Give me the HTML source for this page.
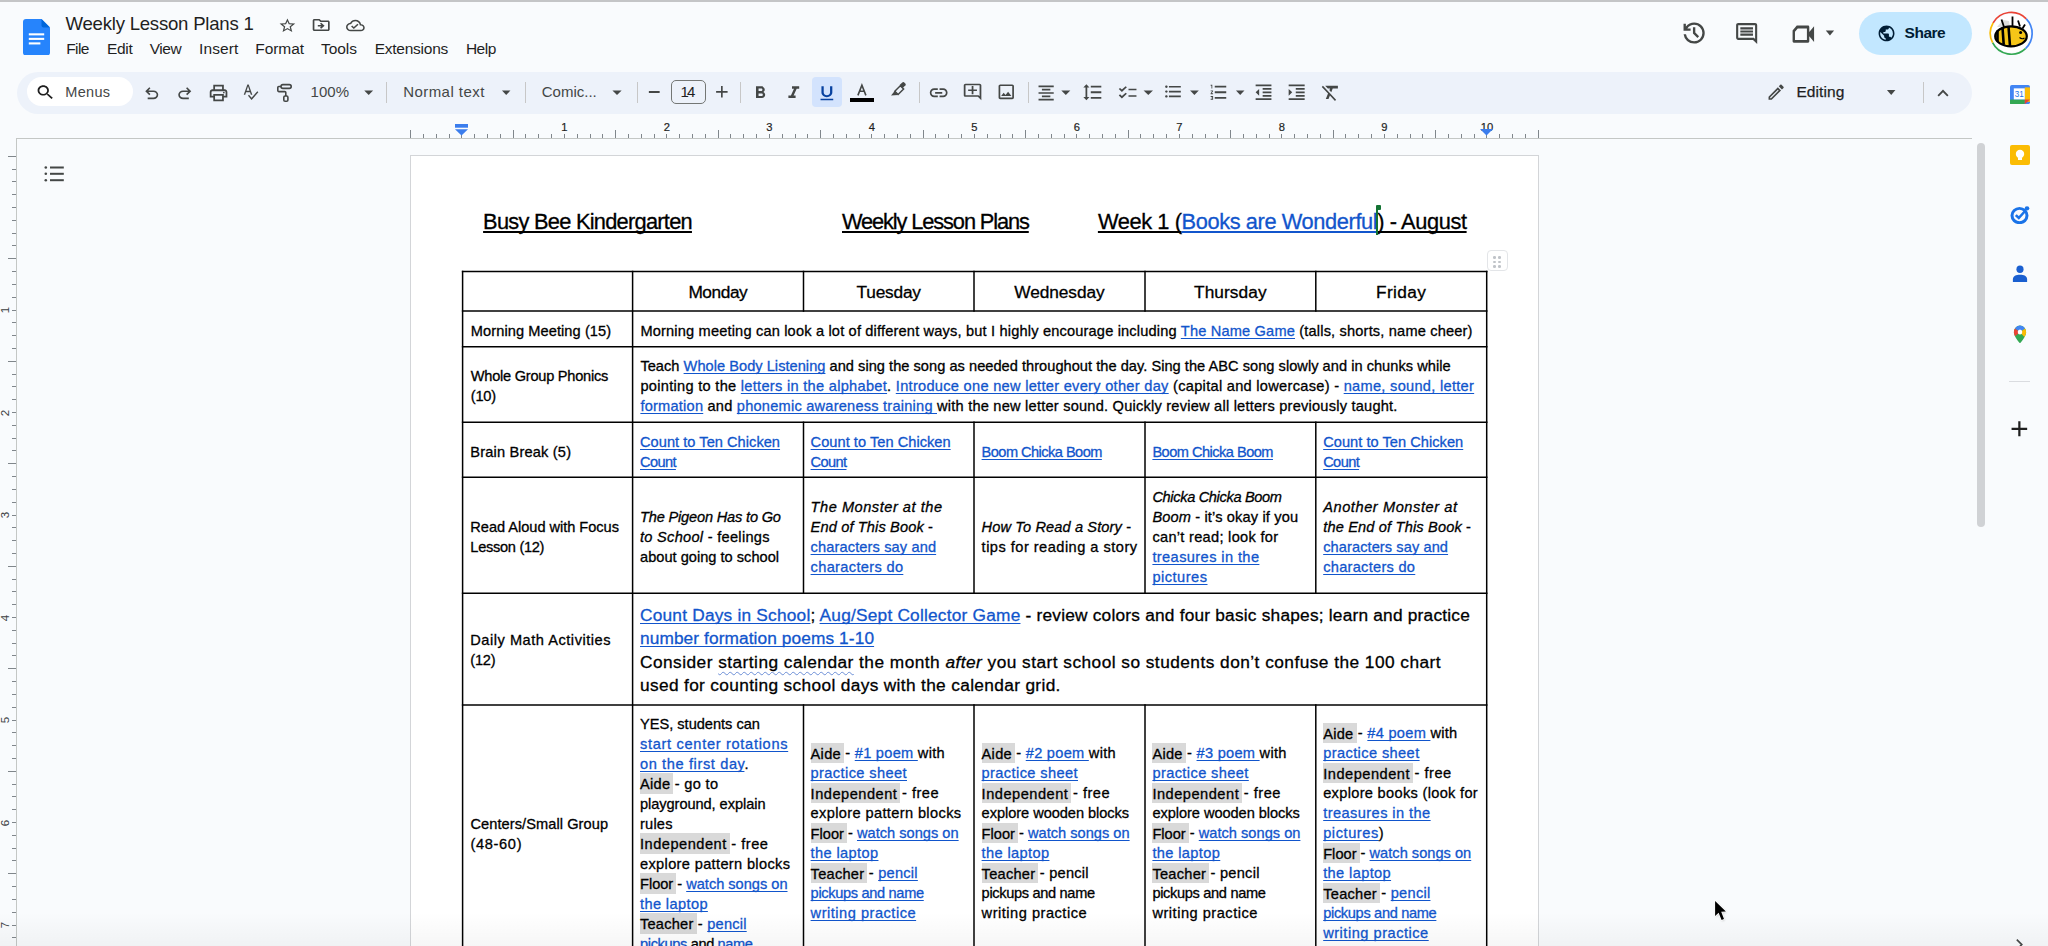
<!DOCTYPE html>
<html><head><meta charset="utf-8"><style>
*{margin:0;padding:0;box-sizing:content-box}
html,body{width:2048px;height:946px;overflow:hidden;background:#f9fbfd;font-family:"Liberation Sans",sans-serif}
.ic{position:absolute;display:block}
.t{position:absolute;white-space:pre;line-height:20px}
.d{-webkit-text-stroke:0.3px currentColor;color:#000}
u.l{color:#1155cc;text-decoration:underline;text-decoration-thickness:1px;text-underline-offset:2px}
u.k{text-decoration:underline;text-decoration-thickness:2px;text-underline-offset:1.5px}
u.k2{text-decoration-thickness:2px;text-underline-offset:1.5px}
.h{background:#d9d9d9;padding:2.8px 0 1.6px 0;box-shadow:3px 0 0 #d9d9d9}
.sp{text-decoration-skip-ink:none;text-decoration:underline wavy #6b8ed6;text-decoration-thickness:1px;text-underline-offset:3px}
.bl{position:absolute;background:#000}
u{text-decoration-skip-ink:none}
</style></head>
<body>
<div style="position:absolute;left:0;top:0;width:2048px;height:2px;background:#c4c5c7"></div>
<svg class="ic" style="left:23px;top:18.5px;width:27px;height:36.5px" viewBox="0 0 27 37" preserveAspectRatio="none"><path d="M3 0h15.5L27 8.5V34a3 3 0 0 1-3 3H3a3 3 0 0 1-3-3V3a3 3 0 0 1 3-3z" fill="#2684fc"/><path d="M18.5 0L27 8.5h-6.5a2 2 0 0 1-2-2z" fill="#0066da"/><rect x="5.8" y="14.5" width="15.4" height="2.1" fill="#fff"/><rect x="5.8" y="19.1" width="15.4" height="2.1" fill="#fff"/><rect x="5.8" y="23.7" width="11.6" height="2.1" fill="#fff"/></svg>
<div style="position:absolute;left:1859px;top:12.3px;width:113.3px;height:42.5px;border-radius:22px;background:#c2e7ff"></div>
<svg class="ic" style="left:1986px;top:8px;width:50px;height:50px" viewBox="1986 8 50 50">
<g fill="none" stroke-width="1.7">
<path d="M1993.1 22.8A20.9 20.9 0 0 1 2026.3 18.8" stroke="#ea4335"/>
<path d="M2026.3 18.8A20.9 20.9 0 0 1 2025.5 48.6" stroke="#4285f4"/>
<path d="M2025.5 48.6A20.9 20.9 0 0 1 1992.6 42.7" stroke="#34a853"/>
<path d="M1992.6 42.7A20.9 20.9 0 0 1 1993.1 22.8" stroke="#fbbc04"/>
</g>
<circle cx="2011.25" cy="33.25" r="19.3" fill="#fff"/>
<path d="M1997 27l6-7 6 1 1 6z" fill="#dcdcdc"/>
<ellipse cx="2011" cy="36.3" rx="15.8" ry="10" fill="#f5c518" stroke="#000" stroke-width="2.2"/>
<path d="M1997.5 30.5v11M2002.5 27.5l1.2 17M2008.5 26.5l1.5 19.5" stroke="#000" stroke-width="2.6" fill="none"/>
<path d="M2001.5 19.5l2.5 7.5M2012.5 16.5v10M2018 20.5l2 6M2025 24.5l-2.5 4" stroke="#000" stroke-width="1.8" fill="none"/>
<circle cx="2020.6" cy="32.4" r="1.5" fill="#000"/>
<path d="M2019.5 37.5q2.5 2.2 5 0.5" stroke="#000" stroke-width="1.2" fill="none"/>
</svg>
<div style="position:absolute;left:17.4px;top:71.5px;width:1954.6px;height:42px;border-radius:21px;background:#edf2fa"></div>
<div style="position:absolute;left:27px;top:77px;width:106.4px;height:29px;border-radius:15px;background:#fff"></div>
<div style="position:absolute;left:386.1px;top:82px;width:1px;height:21px;background:#c7c7c7"></div>
<div style="position:absolute;left:525.1px;top:82px;width:1px;height:21px;background:#c7c7c7"></div>
<div style="position:absolute;left:637.4px;top:82px;width:1px;height:21px;background:#c7c7c7"></div>
<div style="position:absolute;left:739.8px;top:82px;width:1px;height:21px;background:#c7c7c7"></div>
<div style="position:absolute;left:918.5px;top:82px;width:1px;height:21px;background:#c7c7c7"></div>
<div style="position:absolute;left:1028.0px;top:82px;width:1px;height:21px;background:#c7c7c7"></div>
<div style="position:absolute;left:1922.5px;top:82px;width:1px;height:20.799999999999997px;background:#c7c7c7"></div>
<div style="position:absolute;left:671.3px;top:80.2px;width:33.2px;height:22.1px;border:1px solid #747775;border-radius:5px"></div>
<div style="position:absolute;left:812.4px;top:76.5px;width:30px;height:30.8px;border-radius:4px;background:#d3e3fd"></div>
<div style="position:absolute;left:850.4px;top:98.4px;width:23.6px;height:3.6px;background:#000"></div>
<svg class="ic" style="left:270px;top:80px;width:30px;height:26px" viewBox="270 80 30 26" fill="none" stroke="#444746" stroke-width="1.6">
<rect x="281" y="84.6" width="10.2" height="3.8" rx="1.9"/>
<path d="M281 86.5H278.8Q277.8 86.5 277.8 87.5V90.6Q277.8 91.6 278.8 91.6H284.8Q285.8 91.6 285.8 92.6V96"/>
<rect x="283.8" y="96" width="4.1" height="5.3" rx="1.3"/>
</svg>
<svg class="ic" style="left:845px;top:76px;width:65px;height:30px" viewBox="845 76 65 30" fill="none" stroke="#444746">
<path d="M857.9 95.4L861.9 85.2L865.9 95.4M859.3 91.2H864.5" stroke-width="1.6"/>
<path d="M894.8 91.2L900.3 85.7L903.6 89L898.1 94.5Z" stroke-width="1.5"/>
<path d="M899.6 85L902.6 82.3Q903.3 81.7 904 82.3L905.5 83.8Q906.1 84.5 905.5 85.2L902.5 88.2Z" fill="#444746" stroke="none"/>
<path d="M894.5 91.3L898.2 95L891 95.5Z" fill="#444746" stroke="none"/>
</svg>
<svg class="ic" style="left:277.93px;top:16.87px;width:18.84px;height:17.18px" viewBox="0 0 24 24" preserveAspectRatio="none" fill="#444746"><path d="M22 9.24l-7.19-.62L12 2 9.19 8.63 2 9.24l5.46 4.73L5.82 21 12 17.27 18.18 21l-1.63-7.03L22 9.24zM12 15.4l-3.76 2.27 1-4.28-3.32-2.88 4.38-.38L12 6.1l1.71 4.04 4.38.38-3.32 2.88 1 4.28L12 15.4z"/></svg>
<svg class="ic" style="left:311.30px;top:15.74px;width:20.40px;height:18.08px" viewBox="0 0 24 24" preserveAspectRatio="none" fill="#444746"><path d="M20 6h-8l-2-2H4c-1.1 0-1.99.9-1.99 2L2 18c0 1.1.9 2 2 2h16c1.1 0 2-.9 2-2V8c0-1.1-.9-2-2-2zm0 12H4V6h5.17l2 2H20v10zm-7.84-6H8v2h4.16l-1.59 1.59L11.99 17 16 13.01 11.99 9l-1.41 1.41L12.16 12z"/></svg>
<svg class="ic" style="left:346.25px;top:16.55px;width:18.75px;height:17.10px" viewBox="0 0 24 24" preserveAspectRatio="none" fill="#444746"><path d="M19.35 10.04C18.67 6.59 15.64 4 12 4 9.11 4 6.6 5.64 5.35 8.04 2.34 8.36 0 10.91 0 14c0 3.31 2.69 6 6 6h13c2.76 0 5-2.24 5-5 0-2.64-2.05-4.78-4.65-4.96zM19 18H6c-2.21 0-4-1.79-4-4 0-2.05 1.53-3.76 3.56-3.97l1.07-.11.5-.95C8.080 7.14 9.94 6 12 6c2.62 0 4.88 1.86 5.39 4.43l.3 1.5 1.53.11c1.56.1 2.78 1.41 2.78 2.96 0 1.65-1.35 3-3 3zm-9-3.82l-2.09-2.09L6.5 13.5 10 17l6.01-6.01-1.41-1.41z"/></svg>
<svg class="ic" style="left:35.19px;top:83.07px;width:20.86px;height:18.66px" viewBox="0 0 24 24" preserveAspectRatio="none" fill="#1f1f1f"><path d="M15.5 14h-.79l-.28-.27C15.41 12.59 16 11.110 16 9.5 16 5.91 13.09 3 9.5 3S3 5.91 3 9.5 5.91 16 9.5 16c1.610 0 3.090-.59 4.230-1.57l.27.28v.79l5 4.99L20.49 19l-4.99-5zm-6 0C7.010 14 5 11.99 5 9.5S7.010 5 9.5 5 14 7.010 14 9.5 11.99 14 9.5 14z"/></svg>
<svg class="ic" style="left:141.75px;top:83.80px;width:19.50px;height:19.20px" viewBox="0 -960 960 960" preserveAspectRatio="none" fill="#444746"><path d="M280-200v-80h284q63 0 109.5-40T720-420q0-60-46.5-100T564-560H312l104 104-56 56-200-200 200-200 56 56-104 104h252q97 0 166.5 63T800-420q0 94-69.5 157T564-200H280Z"/></svg>
<svg class="ic" style="left:174.75px;top:83.80px;width:19.50px;height:19.20px" viewBox="0 -960 960 960" preserveAspectRatio="none" fill="#444746"><path d="M396-200q-97 0-166.5-63T160-420q0-94 69.5-157T396-640h252L544-744l56-56 200 200-200 200-56-56 104-104H396q-63 0-109.5 40T240-420q0 60 46.5 100T396-280h284v80H396Z"/></svg>
<svg class="ic" style="left:207.64px;top:81.75px;width:21.12px;height:22.00px" viewBox="0 0 24 24" preserveAspectRatio="none" fill="#444746"><path d="M19 8h-1V3H6v5H5c-1.66 0-3 1.34-3 3v6h4v4h12v-4h4v-6c0-1.66-1.34-3-3-3zM8 5h8v3H8V5zm8 14H8v-4h8v4zm4-4h-2v-2H6v2H4v-4c0-.55.45-1 1-1h14c.55 0 1 .45 1 1v4z"/><circle cx="18" cy="11.5" r="1"/></svg>
<svg class="ic" style="left:242.25px;top:81.62px;width:17.06px;height:19.08px" viewBox="0 0 24 24" preserveAspectRatio="none" fill="#444746"><path d="M12.45 16h2.09L9.43 3H7.57L2.46 16h2.09l1.12-3h5.64l1.14 3zm-6.02-5L8.5 5.48 10.57 11H6.43zm15.16.59l-8.09 8.09L9.83 16l-1.41 1.41 5.09 5.09L23 13l-1.41-1.41z"/></svg>
<svg class="ic" style="left:358.17px;top:80.60px;width:21.36px;height:22.56px" viewBox="0 0 24 24" preserveAspectRatio="none" fill="#444746"><path d="M7 10l5 5 5-5z"/></svg>
<svg class="ic" style="left:495.55px;top:80.60px;width:20.40px;height:22.56px" viewBox="0 0 24 24" preserveAspectRatio="none" fill="#444746"><path d="M7 10l5 5 5-5z"/></svg>
<svg class="ic" style="left:606.36px;top:80.60px;width:22.08px;height:22.56px" viewBox="0 0 24 24" preserveAspectRatio="none" fill="#444746"><path d="M7 10l5 5 5-5z"/></svg>
<svg class="ic" style="left:645.14px;top:80.00px;width:18.51px;height:24.00px" viewBox="0 0 24 24" preserveAspectRatio="none" fill="#444746"><path d="M19 13H5v-2h14v2z"/></svg>
<svg class="ic" style="left:711.69px;top:82.39px;width:19.71px;height:19.71px" viewBox="0 0 24 24" preserveAspectRatio="none" fill="#444746"><path d="M19 13h-6v6h-2v-6H5v-2h6V5h2v6h6v2z"/></svg>
<svg class="ic" style="left:749.81px;top:82.96px;width:20.54px;height:20.06px" viewBox="0 0 24 24" preserveAspectRatio="none" fill="#444746"><path d="M15.6 10.79c.97-.67 1.65-1.77 1.65-2.790 0-2.26-1.75-4-4-4H7v14h7.04c2.09 0 3.71-1.7 3.71-3.79 0-1.52-.86-2.82-2.15-3.42zM10 6.5h3c.83 0 1.5.67 1.5 1.5s-.67 1.5-1.5 1.5h-3v-3zm3.5 9H10v-3h3.5c.83 0 1.5.67 1.5 1.5s-.67 1.5-1.5 1.5z"/></svg>
<svg class="ic" style="left:783.20px;top:82.96px;width:21.60px;height:20.06px" viewBox="0 0 24 24" preserveAspectRatio="none" fill="#444746"><path d="M10 4v3h2.21l-3.42 8H6v3h8v-3h-2.21l3.42-8H18V4z"/></svg>
<svg class="ic" style="left:816.46px;top:83.67px;width:21.77px;height:18.67px" viewBox="0 0 24 24" preserveAspectRatio="none" fill="#0842a0"><path d="M12 17c3.31 0 6-2.69 6-6V3h-2.5v8c0 1.93-1.57 3.5-3.5 3.5S8.5 12.93 8.5 11V3H6v8c0 3.31 2.69 6 6 6zm-7 2v2h14v-2H5z"/></svg>
<svg class="ic" style="left:928.22px;top:81.70px;width:21.36px;height:21.60px" viewBox="0 0 24 24" preserveAspectRatio="none" fill="#444746"><path d="M3.9 12c0-1.71 1.39-3.1 3.1-3.1h4V7H7c-2.76 0-5 2.24-5 5s2.24 5 5 5h4v-1.9H7c-1.71 0-3.1-1.39-3.1-3.1zM8 13h8v-2H8v2zm9-6h-4v1.9h4c1.71 0 3.1 1.39 3.1 3.1s-1.39 3.1-3.1 3.1h-4V17h4c2.76 0 5-2.24 5-5s-2.24-5-5-5z"/></svg>
<svg class="ic" style="left:961.84px;top:81.85px;width:21.12px;height:19.80px" viewBox="0 0 24 24" preserveAspectRatio="none" fill="#444746"><path d="M22 4c0-1.1-.9-2-2-2H4c-1.1 0-2 .9-2 2v12c0 1.1.9 2 2 2h14l4 4V4zm-2 13.17L18.83 16H4V4h16v13.17zM13 5h-2v4H7v2h4v4h2v-4h4V9h-4z"/></svg>
<svg class="ic" style="left:995.73px;top:82.03px;width:20.53px;height:19.73px" viewBox="0 0 24 24" preserveAspectRatio="none" fill="#444746"><path d="M19 5v14H5V5h14m0-2H5c-1.1 0-2 .9-2 2v14c0 1.1.9 2 2 2h14c1.1 0 2-.9 2-2V5c0-1.1-.9-2-2-2zm-4.86 8.86l-3 3.87L9 13.14 6 17h12l-3.86-5.14z"/></svg>
<svg class="ic" style="left:1036.17px;top:82.50px;width:20.27px;height:20.00px" viewBox="0 0 24 24" preserveAspectRatio="none" fill="#444746"><path d="M7 15v2h10v-2H7zm-4 6h18v-2H3v2zm0-8h18v-2H3v2zm4-6v2h10V7H7zM3 3v2h18V3H3z"/></svg>
<svg class="ic" style="left:1054.70px;top:80.60px;width:21.60px;height:22.56px" viewBox="0 0 24 24" preserveAspectRatio="none" fill="#444746"><path d="M7 10l5 5 5-5z"/></svg>
<svg class="ic" style="left:1081.68px;top:81.21px;width:21.07px;height:22.59px" viewBox="0 0 24 24" preserveAspectRatio="none" fill="#444746"><path d="M6 7h2.5L5 3.5 1.5 7H4v10H1.5L5 20.5 8.5 17H6V7zm4-2v2h12V5H10zm0 14h12v-2H10v2zm0-6h12v-2H10v2z"/></svg>
<svg class="ic" style="left:1116.73px;top:82.62px;width:21.24px;height:19.43px" viewBox="0 0 24 24" preserveAspectRatio="none" fill="#444746"><path d="M22 7h-9v2h9V7zm0 8h-9v2h9v-2zM5.54 11L2 7.46l1.41-1.41 2.12 2.120 4.24-4.24 1.41 1.41L5.54 11zm0 8L2 15.46l1.41-1.41 2.12 2.12 4.24-4.24 1.41 1.41L5.54 19z"/></svg>
<svg class="ic" style="left:1137.42px;top:80.60px;width:22.56px;height:22.56px" viewBox="0 0 24 24" preserveAspectRatio="none" fill="#444746"><path d="M7 10l5 5 5-5z"/></svg>
<svg class="ic" style="left:1162.88px;top:82.40px;width:20.37px;height:19.20px" viewBox="0 0 24 24" preserveAspectRatio="none" fill="#444746"><path d="M4 10.5c-.83 0-1.5.67-1.5 1.5s.67 1.5 1.5 1.5 1.5-.67 1.5-1.5-.67-1.5-1.5-1.5zm0-6c-.83 0-1.5.67-1.5 1.5S3.17 7.5 4 7.5 5.5 6.83 5.5 6 4.83 4.5 4 4.5zm0 12c-.83 0-1.5.68-1.5 1.5s.68 1.5 1.5 1.5 1.5-.68 1.5-1.5-.67-1.5-1.5-1.5zM7 19h14v-2H7v2zm0-6h14v-2H7v2zm0-8v2h14V5H7z"/></svg>
<svg class="ic" style="left:1183.91px;top:80.60px;width:20.88px;height:22.56px" viewBox="0 0 24 24" preserveAspectRatio="none" fill="#444746"><path d="M7 10l5 5 5-5z"/></svg>
<svg class="ic" style="left:1208.76px;top:81.25px;width:19.71px;height:22.50px" viewBox="0 0 24 24" preserveAspectRatio="none" fill="#444746"><path d="M2 17h2v.5H3v1h1v.5H2v1h3v-4H2v1zm1-9h1V4H2v1h1v3zm-1 3h1.8L2 13.1v.9h3v-1H3.2L5 10.9V10H2v1zm5-6v2h14V5H7zm0 14h14v-2H7v2zm0-6h14v-2H7v2z"/></svg>
<svg class="ic" style="left:1229.85px;top:80.60px;width:20.40px;height:22.56px" viewBox="0 0 24 24" preserveAspectRatio="none" fill="#444746"><path d="M7 10l5 5 5-5z"/></svg>
<svg class="ic" style="left:1253.17px;top:81.92px;width:21.07px;height:20.67px" viewBox="0 0 24 24" preserveAspectRatio="none" fill="#444746"><path d="M11 17h10v-2H11v2zm-8-5l4 4V8l-4 4zm0 9h18v-2H3v2zM3 3v2h18V3H3zm8 6h10V7H11v2zm0 4h10v-2H11v2z"/></svg>
<svg class="ic" style="left:1286.33px;top:81.92px;width:21.33px;height:20.67px" viewBox="0 0 24 24" preserveAspectRatio="none" fill="#444746"><path d="M3 21h18v-2H3v2zM3 8v8l4-4-4-4zm8 9h10v-2H11v2zM3 3v2h18V3H3zm8 6h10V7H11v2zm0 4h10v-2H11v2z"/></svg>
<svg class="ic" style="left:1319.91px;top:80.65px;width:21.47px;height:22.80px" viewBox="0 0 24 24" preserveAspectRatio="none" fill="#444746"><path d="M3.27 5L2 6.27l6.97 6.97L6.5 19h3l1.570-3.66L16.73 21 18 19.73 3.55 5.27 3.27 5zM6 5v.18L8.82 8h2.4l-.72 1.68 2.1 2.1L14.21 8H20V5H6z"/></svg>
<svg class="ic" style="left:1766.47px;top:81.95px;width:20.26px;height:20.40px" viewBox="0 0 24 24" preserveAspectRatio="none" fill="#444746"><path d="M3 17.25V21h3.75L17.81 9.94l-3.75-3.75L3 17.25zM5.92 19H5v-.92l9.06-9.06.92.92L5.92 19zM20.71 5.63l-2.34-2.34c-.2-.2-.45-.29-.71-.29s-.51.1-.7.29l-1.83 1.83 3.750 3.75 1.83-1.83c.39-.39.39-1.02 0-1.41z"/></svg>
<svg class="ic" style="left:1880.55px;top:80.00px;width:20.40px;height:24.00px" viewBox="0 0 24 24" preserveAspectRatio="none" fill="#444746"><path d="M7 10l5 5 5-5z"/></svg>
<svg class="ic" style="left:1932.30px;top:82.44px;width:22.00px;height:22.67px" viewBox="0 0 24 24" preserveAspectRatio="none" fill="#444746"><path d="M12 8l-6 6 1.41 1.41L12 10.83l4.59 4.58L18 14z"/></svg>
<svg class="ic" style="left:1679.67px;top:19.08px;width:28.27px;height:28.13px" viewBox="0 -960 960 960" preserveAspectRatio="none" fill="#444746"><path d="M480-120q-138 0-240.5-91.5T122-440h82q14 104 92.5 172T480-200q117 0 198.5-81.5T760-480q0-117-81.5-198.5T480-760q-69 0-129 32t-101 88h110v80H120v-240h80v94q51-64 124.5-99T480-840q75 0 140.5 28.5t114 77q48.5 48.5 77 114T840-480q0 75-28.5 140.5t-77 114q-48.5 48.5-114 77T480-120Zm112-192L440-464v-216h80v184l128 128-56 56Z"/></svg>
<svg class="ic" style="left:1733.79px;top:21.40px;width:25.32px;height:25.20px" viewBox="0 0 24 24" preserveAspectRatio="none" fill="#444746"><path d="M21.99 4c0-1.1-.89-2-1.99-2H4c-1.1 0-2 .9-2 2v12c0 1.1.9 2 2 2h14l4 4-.01-18zM20 4v13.17L18.83 16H4V4h16zM6 12h12v2H6zm0-3h12v2H6zm0-3h12v2H6z"/></svg>
<svg class="ic" style="left:1789.42px;top:17.00px;width:28.67px;height:34.40px" viewBox="0 0 24 24" preserveAspectRatio="none" fill="#444746"><path d="M17 10.5V7c0-.55-.45-1-1-1H6.5L3 9.5V17c0 .55.45 1 1 1h12c.55 0 1-.45 1-1v-3.5l4 4v-11l-4 4zM15 16H5v-5.67L7.33 8H15v8z"/></svg>
<svg class="ic" style="left:1820.19px;top:21.40px;width:19.92px;height:23.04px" viewBox="0 0 24 24" preserveAspectRatio="none" fill="#444746"><path d="M7 10l5 5 5-5z"/></svg>
<svg class="ic" style="left:1877.21px;top:24.22px;width:19.08px;height:18.96px" viewBox="0 0 24 24" preserveAspectRatio="none" fill="#001d35"><path d="M12 2C6.48 2 2 6.48 2 12s4.48 10 10 10 10-4.48 10-10S17.52 2 12 2zm-1 17.93c-3.95-.49-7-3.85-7-7.93 0-.62.08-1.21.21-1.79L9 15v1c0 1.1.9 2 2 2v1.93zm6.9-2.54c-.26-.81-1-1.39-1.9-1.39h-1v-3c0-.55-.45-1-1-1H8v-2h2c.55 0 1-.45 1-1V7h2c1.1 0 2-.9 2-2v-.41c2.93 1.19 5 4.06 5 7.410 0 2.08-.8 3.97-2.1 5.39z"/></svg>
<svg class="ic" style="left:2006.13px;top:415.64px;width:26.74px;height:25.71px" viewBox="0 0 24 24" preserveAspectRatio="none" fill="#1f1f1f"><path d="M19 13h-6v6h-2v-6H5v-2h6V5h2v6h6v2z"/></svg>
<svg class="ic" style="left:2009.5px;top:85px;width:20px;height:19.2px" viewBox="0 0 21 20" preserveAspectRatio="none">
<rect x="0" y="0" width="21" height="20" rx="2" fill="#4285f4"/>
<rect x="15.5" y="2.5" width="5.5" height="15" fill="#fbbc04"/>
<rect x="0" y="15" width="15.5" height="5" rx="1" fill="#34a853"/>
<path d="M15.5 15H21L15.5 20z" fill="#ea4335"/>
<rect x="4" y="3.5" width="11.5" height="11.5" fill="#fff"/>
<text x="9.7" y="13" font-size="8.5" text-anchor="middle" fill="#1a73e8" font-family="Liberation Sans">31</text>
</svg>
<svg class="ic" style="left:2009.7px;top:144.6px;width:20px;height:20px" viewBox="0 0 20 20">
<rect width="20" height="20" rx="2" fill="#fbbc04"/><circle cx="10" cy="9" r="4.2" fill="#fff"/><rect x="8" y="13" width="4" height="2" fill="#fff"/></svg>
<svg class="ic" style="left:2010px;top:204.8px;width:20px;height:19.2px" viewBox="0 0 20 20" preserveAspectRatio="none">
<circle cx="9.5" cy="11" r="7.5" fill="none" stroke="#1a73e8" stroke-width="3"/><path d="M5.8 10.5l3 3 7-8" stroke="#1a73e8" stroke-width="2.6" fill="none"/><circle cx="17" cy="3.5" r="2.3" fill="#1a73e8"/></svg>
<svg class="ic" style="left:2012px;top:264.7px;width:16px;height:17.7px" viewBox="0 0 18 19" preserveAspectRatio="none">
<circle cx="9" cy="4.5" r="4" fill="#1a5fd0"/><path d="M1 19v-3.5C1 12 4.5 10.5 9 10.5s8 1.5 8 5V19z" fill="#1a5fd0"/></svg>
<svg class="ic" style="left:2013px;top:325px;width:14px;height:18.4px" viewBox="0 0 16 19" preserveAspectRatio="none">
<path d="M8 0.5A7 7 0 0 0 1 7.5c0 4.5 7 11.5 7 11.5s7-7 7-11.5A7 7 0 0 0 8 0.5z" fill="#34a853"/>
<path d="M8 0.5A7 7 0 0 0 2.2 3.5L8 7.5l5.8-4A7 7 0 0 0 8 0.5z" fill="#4285f4"/>
<path d="M2.2 3.5A7 7 0 0 0 1 7.5c0 1.2.5 2.6 1.3 4L8 7.5z" fill="#ea4335"/>
<path d="M13.8 3.5A7 7 0 0 1 15 7.5c0 1.5-.8 3.3-2 5L8 7.5z" fill="#fbbc04"/>
<circle cx="8" cy="7.3" r="2.6" fill="#fff"/></svg>
<div style="position:absolute;left:2008.8px;top:380.5px;width:21.2px;height:1px;background:#dadce0"></div>
<div style="position:absolute;left:16px;top:138px;width:1956px;height:1px;background:#c4c7c5"></div>
<div style="position:absolute;left:410.15px;top:129.5px;width:1px;height:8.5px;background:#80868b"></div>
<div style="position:absolute;left:422.96px;top:134px;width:1px;height:4px;background:#80868b"></div>
<div style="position:absolute;left:435.77px;top:134px;width:1px;height:4px;background:#80868b"></div>
<div style="position:absolute;left:448.59px;top:134px;width:1px;height:4px;background:#80868b"></div>
<div style="position:absolute;left:461.40px;top:134px;width:1px;height:4px;background:#80868b"></div>
<div style="position:absolute;left:474.21px;top:134px;width:1px;height:4px;background:#80868b"></div>
<div style="position:absolute;left:487.02px;top:134px;width:1px;height:4px;background:#80868b"></div>
<div style="position:absolute;left:499.84px;top:134px;width:1px;height:4px;background:#80868b"></div>
<div style="position:absolute;left:512.65px;top:129.5px;width:1px;height:8.5px;background:#80868b"></div>
<div style="position:absolute;left:525.46px;top:134px;width:1px;height:4px;background:#80868b"></div>
<div style="position:absolute;left:538.27px;top:134px;width:1px;height:4px;background:#80868b"></div>
<div style="position:absolute;left:551.09px;top:134px;width:1px;height:4px;background:#80868b"></div>
<div style="position:absolute;left:563.90px;top:134px;width:1px;height:4px;background:#80868b"></div>
<div class="t" style="left:549.40px;top:116.8px;width:30px;text-align:center;font-size:11.2px;color:#1f1f1f;-webkit-text-stroke:0.2px #1f1f1f">1</div>
<div style="position:absolute;left:576.71px;top:134px;width:1px;height:4px;background:#80868b"></div>
<div style="position:absolute;left:589.52px;top:134px;width:1px;height:4px;background:#80868b"></div>
<div style="position:absolute;left:602.34px;top:134px;width:1px;height:4px;background:#80868b"></div>
<div style="position:absolute;left:615.15px;top:129.5px;width:1px;height:8.5px;background:#80868b"></div>
<div style="position:absolute;left:627.96px;top:134px;width:1px;height:4px;background:#80868b"></div>
<div style="position:absolute;left:640.77px;top:134px;width:1px;height:4px;background:#80868b"></div>
<div style="position:absolute;left:653.59px;top:134px;width:1px;height:4px;background:#80868b"></div>
<div style="position:absolute;left:666.40px;top:134px;width:1px;height:4px;background:#80868b"></div>
<div class="t" style="left:651.90px;top:116.8px;width:30px;text-align:center;font-size:11.2px;color:#1f1f1f;-webkit-text-stroke:0.2px #1f1f1f">2</div>
<div style="position:absolute;left:679.21px;top:134px;width:1px;height:4px;background:#80868b"></div>
<div style="position:absolute;left:692.02px;top:134px;width:1px;height:4px;background:#80868b"></div>
<div style="position:absolute;left:704.84px;top:134px;width:1px;height:4px;background:#80868b"></div>
<div style="position:absolute;left:717.65px;top:129.5px;width:1px;height:8.5px;background:#80868b"></div>
<div style="position:absolute;left:730.46px;top:134px;width:1px;height:4px;background:#80868b"></div>
<div style="position:absolute;left:743.27px;top:134px;width:1px;height:4px;background:#80868b"></div>
<div style="position:absolute;left:756.09px;top:134px;width:1px;height:4px;background:#80868b"></div>
<div style="position:absolute;left:768.90px;top:134px;width:1px;height:4px;background:#80868b"></div>
<div class="t" style="left:754.40px;top:116.8px;width:30px;text-align:center;font-size:11.2px;color:#1f1f1f;-webkit-text-stroke:0.2px #1f1f1f">3</div>
<div style="position:absolute;left:781.71px;top:134px;width:1px;height:4px;background:#80868b"></div>
<div style="position:absolute;left:794.52px;top:134px;width:1px;height:4px;background:#80868b"></div>
<div style="position:absolute;left:807.34px;top:134px;width:1px;height:4px;background:#80868b"></div>
<div style="position:absolute;left:820.15px;top:129.5px;width:1px;height:8.5px;background:#80868b"></div>
<div style="position:absolute;left:832.96px;top:134px;width:1px;height:4px;background:#80868b"></div>
<div style="position:absolute;left:845.77px;top:134px;width:1px;height:4px;background:#80868b"></div>
<div style="position:absolute;left:858.59px;top:134px;width:1px;height:4px;background:#80868b"></div>
<div style="position:absolute;left:871.40px;top:134px;width:1px;height:4px;background:#80868b"></div>
<div class="t" style="left:856.90px;top:116.8px;width:30px;text-align:center;font-size:11.2px;color:#1f1f1f;-webkit-text-stroke:0.2px #1f1f1f">4</div>
<div style="position:absolute;left:884.21px;top:134px;width:1px;height:4px;background:#80868b"></div>
<div style="position:absolute;left:897.02px;top:134px;width:1px;height:4px;background:#80868b"></div>
<div style="position:absolute;left:909.84px;top:134px;width:1px;height:4px;background:#80868b"></div>
<div style="position:absolute;left:922.65px;top:129.5px;width:1px;height:8.5px;background:#80868b"></div>
<div style="position:absolute;left:935.46px;top:134px;width:1px;height:4px;background:#80868b"></div>
<div style="position:absolute;left:948.27px;top:134px;width:1px;height:4px;background:#80868b"></div>
<div style="position:absolute;left:961.09px;top:134px;width:1px;height:4px;background:#80868b"></div>
<div style="position:absolute;left:973.90px;top:134px;width:1px;height:4px;background:#80868b"></div>
<div class="t" style="left:959.40px;top:116.8px;width:30px;text-align:center;font-size:11.2px;color:#1f1f1f;-webkit-text-stroke:0.2px #1f1f1f">5</div>
<div style="position:absolute;left:986.71px;top:134px;width:1px;height:4px;background:#80868b"></div>
<div style="position:absolute;left:999.52px;top:134px;width:1px;height:4px;background:#80868b"></div>
<div style="position:absolute;left:1012.34px;top:134px;width:1px;height:4px;background:#80868b"></div>
<div style="position:absolute;left:1025.15px;top:129.5px;width:1px;height:8.5px;background:#80868b"></div>
<div style="position:absolute;left:1037.96px;top:134px;width:1px;height:4px;background:#80868b"></div>
<div style="position:absolute;left:1050.78px;top:134px;width:1px;height:4px;background:#80868b"></div>
<div style="position:absolute;left:1063.59px;top:134px;width:1px;height:4px;background:#80868b"></div>
<div style="position:absolute;left:1076.40px;top:134px;width:1px;height:4px;background:#80868b"></div>
<div class="t" style="left:1061.90px;top:116.8px;width:30px;text-align:center;font-size:11.2px;color:#1f1f1f;-webkit-text-stroke:0.2px #1f1f1f">6</div>
<div style="position:absolute;left:1089.21px;top:134px;width:1px;height:4px;background:#80868b"></div>
<div style="position:absolute;left:1102.03px;top:134px;width:1px;height:4px;background:#80868b"></div>
<div style="position:absolute;left:1114.84px;top:134px;width:1px;height:4px;background:#80868b"></div>
<div style="position:absolute;left:1127.65px;top:129.5px;width:1px;height:8.5px;background:#80868b"></div>
<div style="position:absolute;left:1140.46px;top:134px;width:1px;height:4px;background:#80868b"></div>
<div style="position:absolute;left:1153.28px;top:134px;width:1px;height:4px;background:#80868b"></div>
<div style="position:absolute;left:1166.09px;top:134px;width:1px;height:4px;background:#80868b"></div>
<div style="position:absolute;left:1178.90px;top:134px;width:1px;height:4px;background:#80868b"></div>
<div class="t" style="left:1164.40px;top:116.8px;width:30px;text-align:center;font-size:11.2px;color:#1f1f1f;-webkit-text-stroke:0.2px #1f1f1f">7</div>
<div style="position:absolute;left:1191.71px;top:134px;width:1px;height:4px;background:#80868b"></div>
<div style="position:absolute;left:1204.53px;top:134px;width:1px;height:4px;background:#80868b"></div>
<div style="position:absolute;left:1217.34px;top:134px;width:1px;height:4px;background:#80868b"></div>
<div style="position:absolute;left:1230.15px;top:129.5px;width:1px;height:8.5px;background:#80868b"></div>
<div style="position:absolute;left:1242.96px;top:134px;width:1px;height:4px;background:#80868b"></div>
<div style="position:absolute;left:1255.78px;top:134px;width:1px;height:4px;background:#80868b"></div>
<div style="position:absolute;left:1268.59px;top:134px;width:1px;height:4px;background:#80868b"></div>
<div style="position:absolute;left:1281.40px;top:134px;width:1px;height:4px;background:#80868b"></div>
<div class="t" style="left:1266.90px;top:116.8px;width:30px;text-align:center;font-size:11.2px;color:#1f1f1f;-webkit-text-stroke:0.2px #1f1f1f">8</div>
<div style="position:absolute;left:1294.21px;top:134px;width:1px;height:4px;background:#80868b"></div>
<div style="position:absolute;left:1307.03px;top:134px;width:1px;height:4px;background:#80868b"></div>
<div style="position:absolute;left:1319.84px;top:134px;width:1px;height:4px;background:#80868b"></div>
<div style="position:absolute;left:1332.65px;top:129.5px;width:1px;height:8.5px;background:#80868b"></div>
<div style="position:absolute;left:1345.46px;top:134px;width:1px;height:4px;background:#80868b"></div>
<div style="position:absolute;left:1358.28px;top:134px;width:1px;height:4px;background:#80868b"></div>
<div style="position:absolute;left:1371.09px;top:134px;width:1px;height:4px;background:#80868b"></div>
<div style="position:absolute;left:1383.90px;top:134px;width:1px;height:4px;background:#80868b"></div>
<div class="t" style="left:1369.40px;top:116.8px;width:30px;text-align:center;font-size:11.2px;color:#1f1f1f;-webkit-text-stroke:0.2px #1f1f1f">9</div>
<div style="position:absolute;left:1396.71px;top:134px;width:1px;height:4px;background:#80868b"></div>
<div style="position:absolute;left:1409.53px;top:134px;width:1px;height:4px;background:#80868b"></div>
<div style="position:absolute;left:1422.34px;top:134px;width:1px;height:4px;background:#80868b"></div>
<div style="position:absolute;left:1435.15px;top:129.5px;width:1px;height:8.5px;background:#80868b"></div>
<div style="position:absolute;left:1447.96px;top:134px;width:1px;height:4px;background:#80868b"></div>
<div style="position:absolute;left:1460.78px;top:134px;width:1px;height:4px;background:#80868b"></div>
<div style="position:absolute;left:1473.59px;top:134px;width:1px;height:4px;background:#80868b"></div>
<div style="position:absolute;left:1486.40px;top:134px;width:1px;height:4px;background:#80868b"></div>
<div class="t" style="left:1471.90px;top:116.8px;width:30px;text-align:center;font-size:11.2px;color:#1f1f1f;-webkit-text-stroke:0.2px #1f1f1f">10</div>
<div style="position:absolute;left:1499.21px;top:134px;width:1px;height:4px;background:#80868b"></div>
<div style="position:absolute;left:1512.03px;top:134px;width:1px;height:4px;background:#80868b"></div>
<div style="position:absolute;left:1524.84px;top:134px;width:1px;height:4px;background:#80868b"></div>
<div style="position:absolute;left:1537.65px;top:129.5px;width:1px;height:8.5px;background:#80868b"></div>
<svg class="ic" style="left:455px;top:124px;width:13px;height:12px" viewBox="0 0 13 12"><rect x="0" y="0" width="13" height="3.7" fill="#3b7ded"/><path d="M0 5.2h13L6.5 11.5z" fill="#3b7ded"/></svg>
<svg class="ic" style="left:1480.40px;top:129px;width:13px;height:7px" viewBox="0 0 13 7"><path d="M0 0h13L6.5 6.5z" fill="#3b7ded"/></svg>
<div style="position:absolute;left:16px;top:138px;width:1px;height:808px;background:#c4c7c5"></div>
<div style="position:absolute;left:8px;top:155.75px;width:8px;height:1px;background:#80868b"></div>
<div style="position:absolute;left:12px;top:168.56px;width:4px;height:1px;background:#80868b"></div>
<div style="position:absolute;left:12px;top:181.38px;width:4px;height:1px;background:#80868b"></div>
<div style="position:absolute;left:12px;top:194.19px;width:4px;height:1px;background:#80868b"></div>
<div style="position:absolute;left:12px;top:207.00px;width:4px;height:1px;background:#80868b"></div>
<div style="position:absolute;left:12px;top:219.81px;width:4px;height:1px;background:#80868b"></div>
<div style="position:absolute;left:12px;top:232.62px;width:4px;height:1px;background:#80868b"></div>
<div style="position:absolute;left:12px;top:245.44px;width:4px;height:1px;background:#80868b"></div>
<div style="position:absolute;left:8px;top:258.25px;width:8px;height:1px;background:#80868b"></div>
<div style="position:absolute;left:12px;top:271.06px;width:4px;height:1px;background:#80868b"></div>
<div style="position:absolute;left:12px;top:283.88px;width:4px;height:1px;background:#80868b"></div>
<div style="position:absolute;left:12px;top:296.69px;width:4px;height:1px;background:#80868b"></div>
<div style="position:absolute;left:12px;top:309.50px;width:4px;height:1px;background:#80868b"></div>
<div class="t" style="left:-10px;top:302.00px;width:30px;height:16px;text-align:center;font-size:11.5px;line-height:16px;color:#3c4043;transform:rotate(-90deg)">1</div>
<div style="position:absolute;left:12px;top:322.31px;width:4px;height:1px;background:#80868b"></div>
<div style="position:absolute;left:12px;top:335.12px;width:4px;height:1px;background:#80868b"></div>
<div style="position:absolute;left:12px;top:347.94px;width:4px;height:1px;background:#80868b"></div>
<div style="position:absolute;left:8px;top:360.75px;width:8px;height:1px;background:#80868b"></div>
<div style="position:absolute;left:12px;top:373.56px;width:4px;height:1px;background:#80868b"></div>
<div style="position:absolute;left:12px;top:386.38px;width:4px;height:1px;background:#80868b"></div>
<div style="position:absolute;left:12px;top:399.19px;width:4px;height:1px;background:#80868b"></div>
<div style="position:absolute;left:12px;top:412.00px;width:4px;height:1px;background:#80868b"></div>
<div class="t" style="left:-10px;top:404.50px;width:30px;height:16px;text-align:center;font-size:11.5px;line-height:16px;color:#3c4043;transform:rotate(-90deg)">2</div>
<div style="position:absolute;left:12px;top:424.81px;width:4px;height:1px;background:#80868b"></div>
<div style="position:absolute;left:12px;top:437.62px;width:4px;height:1px;background:#80868b"></div>
<div style="position:absolute;left:12px;top:450.44px;width:4px;height:1px;background:#80868b"></div>
<div style="position:absolute;left:8px;top:463.25px;width:8px;height:1px;background:#80868b"></div>
<div style="position:absolute;left:12px;top:476.06px;width:4px;height:1px;background:#80868b"></div>
<div style="position:absolute;left:12px;top:488.88px;width:4px;height:1px;background:#80868b"></div>
<div style="position:absolute;left:12px;top:501.69px;width:4px;height:1px;background:#80868b"></div>
<div style="position:absolute;left:12px;top:514.50px;width:4px;height:1px;background:#80868b"></div>
<div class="t" style="left:-10px;top:507.00px;width:30px;height:16px;text-align:center;font-size:11.5px;line-height:16px;color:#3c4043;transform:rotate(-90deg)">3</div>
<div style="position:absolute;left:12px;top:527.31px;width:4px;height:1px;background:#80868b"></div>
<div style="position:absolute;left:12px;top:540.12px;width:4px;height:1px;background:#80868b"></div>
<div style="position:absolute;left:12px;top:552.94px;width:4px;height:1px;background:#80868b"></div>
<div style="position:absolute;left:8px;top:565.75px;width:8px;height:1px;background:#80868b"></div>
<div style="position:absolute;left:12px;top:578.56px;width:4px;height:1px;background:#80868b"></div>
<div style="position:absolute;left:12px;top:591.38px;width:4px;height:1px;background:#80868b"></div>
<div style="position:absolute;left:12px;top:604.19px;width:4px;height:1px;background:#80868b"></div>
<div style="position:absolute;left:12px;top:617.00px;width:4px;height:1px;background:#80868b"></div>
<div class="t" style="left:-10px;top:609.50px;width:30px;height:16px;text-align:center;font-size:11.5px;line-height:16px;color:#3c4043;transform:rotate(-90deg)">4</div>
<div style="position:absolute;left:12px;top:629.81px;width:4px;height:1px;background:#80868b"></div>
<div style="position:absolute;left:12px;top:642.62px;width:4px;height:1px;background:#80868b"></div>
<div style="position:absolute;left:12px;top:655.44px;width:4px;height:1px;background:#80868b"></div>
<div style="position:absolute;left:8px;top:668.25px;width:8px;height:1px;background:#80868b"></div>
<div style="position:absolute;left:12px;top:681.06px;width:4px;height:1px;background:#80868b"></div>
<div style="position:absolute;left:12px;top:693.88px;width:4px;height:1px;background:#80868b"></div>
<div style="position:absolute;left:12px;top:706.69px;width:4px;height:1px;background:#80868b"></div>
<div style="position:absolute;left:12px;top:719.50px;width:4px;height:1px;background:#80868b"></div>
<div class="t" style="left:-10px;top:712.00px;width:30px;height:16px;text-align:center;font-size:11.5px;line-height:16px;color:#3c4043;transform:rotate(-90deg)">5</div>
<div style="position:absolute;left:12px;top:732.31px;width:4px;height:1px;background:#80868b"></div>
<div style="position:absolute;left:12px;top:745.12px;width:4px;height:1px;background:#80868b"></div>
<div style="position:absolute;left:12px;top:757.94px;width:4px;height:1px;background:#80868b"></div>
<div style="position:absolute;left:8px;top:770.75px;width:8px;height:1px;background:#80868b"></div>
<div style="position:absolute;left:12px;top:783.56px;width:4px;height:1px;background:#80868b"></div>
<div style="position:absolute;left:12px;top:796.38px;width:4px;height:1px;background:#80868b"></div>
<div style="position:absolute;left:12px;top:809.19px;width:4px;height:1px;background:#80868b"></div>
<div style="position:absolute;left:12px;top:822.00px;width:4px;height:1px;background:#80868b"></div>
<div class="t" style="left:-10px;top:814.50px;width:30px;height:16px;text-align:center;font-size:11.5px;line-height:16px;color:#3c4043;transform:rotate(-90deg)">6</div>
<div style="position:absolute;left:12px;top:834.81px;width:4px;height:1px;background:#80868b"></div>
<div style="position:absolute;left:12px;top:847.62px;width:4px;height:1px;background:#80868b"></div>
<div style="position:absolute;left:12px;top:860.44px;width:4px;height:1px;background:#80868b"></div>
<div style="position:absolute;left:8px;top:873.25px;width:8px;height:1px;background:#80868b"></div>
<div style="position:absolute;left:12px;top:886.06px;width:4px;height:1px;background:#80868b"></div>
<div style="position:absolute;left:12px;top:898.88px;width:4px;height:1px;background:#80868b"></div>
<div style="position:absolute;left:12px;top:911.69px;width:4px;height:1px;background:#80868b"></div>
<div style="position:absolute;left:12px;top:924.50px;width:4px;height:1px;background:#80868b"></div>
<div class="t" style="left:-10px;top:917.00px;width:30px;height:16px;text-align:center;font-size:11.5px;line-height:16px;color:#3c4043;transform:rotate(-90deg)">7</div>
<div style="position:absolute;left:12px;top:937.31px;width:4px;height:1px;background:#80868b"></div>
<svg class="ic" style="left:44px;top:165px;width:21px;height:18px" viewBox="0 0 21 18"><circle cx="1.8" cy="2.5" r="1.3" fill="#444746"/><circle cx="1.8" cy="8.8" r="1.3" fill="#444746"/><circle cx="1.8" cy="15.2" r="1.3" fill="#444746"/><rect x="6" y="1.5" width="13.8" height="2" fill="#444746"/><rect x="6" y="7.8" width="13.8" height="2" fill="#444746"/><rect x="6" y="14.2" width="13.8" height="2" fill="#444746"/></svg>
<div style="position:absolute;left:1977px;top:143px;width:8px;height:384px;border-radius:4px;background:#d0d2d5"></div>
<div style="position:absolute;left:410.3px;top:155px;width:1127px;height:800px;background:#fff;border:1px solid #d3d5d8;border-bottom:none"></div>
<svg class="ic" style="left:0;top:0;width:2048px;height:946px" viewBox="0 0 2048 946" stroke="#000" stroke-width="1.5" fill="none"><path d="M461.85 271.5H1487.45"/><path d="M461.85 311.1H1487.45"/><path d="M461.85 346.7H1487.45"/><path d="M461.85 422.3H1487.45"/><path d="M461.85 477.3H1487.45"/><path d="M461.85 593.2H1487.45"/><path d="M461.85 705.0H1487.45"/><path d="M462.6 270.75V950"/><path d="M632.6 270.75V950"/><path d="M1486.7 270.75V950"/><path d="M803.5 270.75V311.85"/><path d="M803.5 421.55V593.95"/><path d="M803.5 704.25V950.75"/><path d="M974.0 270.75V311.85"/><path d="M974.0 421.55V593.95"/><path d="M974.0 704.25V950.75"/><path d="M1145.0 270.75V311.85"/><path d="M1145.0 421.55V593.95"/><path d="M1145.0 704.25V950.75"/><path d="M1315.8 270.75V311.85"/><path d="M1315.8 421.55V593.95"/><path d="M1315.8 704.25V950.75"/></svg>
<div style="position:absolute;left:1487px;top:250px;width:19px;height:19px;border:1px solid #e3e5e8;border-radius:4px;background:#fff"></div>
<div style="position:absolute;left:1493px;top:256px;width:2.6px;height:2.6px;border-radius:50%;background:#c0c4c9"></div>
<div style="position:absolute;left:1493px;top:260.5px;width:2.6px;height:2.6px;border-radius:50%;background:#c0c4c9"></div>
<div style="position:absolute;left:1493px;top:265px;width:2.6px;height:2.6px;border-radius:50%;background:#c0c4c9"></div>
<div style="position:absolute;left:1498.3px;top:256px;width:2.6px;height:2.6px;border-radius:50%;background:#c0c4c9"></div>
<div style="position:absolute;left:1498.3px;top:260.5px;width:2.6px;height:2.6px;border-radius:50%;background:#c0c4c9"></div>
<div style="position:absolute;left:1498.3px;top:265px;width:2.6px;height:2.6px;border-radius:50%;background:#c0c4c9"></div>
<div class="t d" id="L0" style="left:483.10px;top:211.65px;font-size:21.8px;letter-spacing:-0.729px;"><u class="k">Busy Bee Kindergarten</u></div>
<div class="t d" id="L1" style="left:842.00px;top:211.75px;font-size:21.8px;letter-spacing:-1.117px;"><u class="k">Weekly Lesson Plans</u></div>
<div class="t d" id="L2" style="left:1097.90px;top:212.05px;font-size:21.8px;letter-spacing:-0.393px;"><u class="k">Week 1 (</u><u class="l k2">Books are Wonderful</u><u class="k">) - August</u></div>
<div class="t d" id="L3" style="left:688.40px;top:282.41px;font-size:17.3px;letter-spacing:-0.434px;">Monday</div>
<div class="t d" id="L4" style="left:856.50px;top:282.41px;font-size:17.3px;letter-spacing:-0.191px;">Tuesday</div>
<div class="t d" id="L5" style="left:1014.20px;top:282.41px;font-size:17.3px;letter-spacing:-0.054px;">Wednesday</div>
<div class="t d" id="L6" style="left:1194.00px;top:282.41px;font-size:17.3px;letter-spacing:0.080px;">Thursday</div>
<div class="t d" id="L7" style="left:1376.00px;top:282.41px;font-size:17.3px;letter-spacing:0.396px;">Friday</div>
<div class="t d" id="L8" style="left:470.80px;top:320.74px;font-size:14.6px;letter-spacing:0.084px;">Morning Meeting (15)</div>
<div class="t d" id="L9" style="left:640.40px;top:320.74px;font-size:14.6px;letter-spacing:0.174px;">Morning meeting can look a lot of different ways, but I highly encourage including <u class="l">The Name Game</u> (talls, shorts, name cheer)</div>
<div class="t d" id="L10" style="left:470.80px;top:365.94px;font-size:14.6px;letter-spacing:-0.247px;">Whole Group Phonics</div>
<div class="t d" id="L11" style="left:470.80px;top:385.74px;font-size:14.6px;letter-spacing:-0.250px;">(10)</div>
<div class="t d" id="L12" style="left:640.40px;top:355.94px;font-size:14.6px;letter-spacing:0.034px;">Teach <u class="l">Whole Body Listening</u> and sing the song as needed throughout the day. Sing the ABC song slowly and in chunks while</div>
<div class="t d" id="L13" style="left:640.40px;top:375.94px;font-size:14.6px;letter-spacing:0.292px;">pointing to the <u class="l">letters in the alphabet</u>. <u class="l">Introduce one new letter every other day</u> (capital and lowercase) - <u class="l">name, sound, letter</u></div>
<div class="t d" id="L14" style="left:640.40px;top:395.94px;font-size:14.6px;letter-spacing:0.224px;"><u class="l">formation</u> and <u class="l">phonemic awareness training </u>with the new letter sound. Quickly review all letters previously taught.</div>
<div class="t d" id="L15" style="left:470.30px;top:441.74px;font-size:14.6px;letter-spacing:0.183px;">Brain Break (5)</div>
<div class="t d" id="L16" style="left:640.00px;top:431.94px;font-size:14.6px;letter-spacing:0.038px;"><u class="l">Count to Ten Chicken</u></div>
<div class="t d" id="L17" style="left:640.00px;top:451.74px;font-size:14.6px;letter-spacing:-0.612px;"><u class="l">Count</u></div>
<div class="t d" id="L18" style="left:810.60px;top:431.94px;font-size:14.6px;letter-spacing:0.039px;"><u class="l">Count to Ten Chicken</u></div>
<div class="t d" id="L19" style="left:810.60px;top:451.74px;font-size:14.6px;letter-spacing:-0.612px;"><u class="l">Count</u></div>
<div class="t d" id="L20" style="left:1323.20px;top:431.94px;font-size:14.6px;letter-spacing:0.039px;"><u class="l">Count to Ten Chicken</u></div>
<div class="t d" id="L21" style="left:1323.20px;top:451.74px;font-size:14.6px;letter-spacing:-0.609px;"><u class="l">Count</u></div>
<div class="t d" id="L22" style="left:981.60px;top:441.74px;font-size:14.6px;letter-spacing:-0.544px;"><u class="l">Boom Chicka Boom</u></div>
<div class="t d" id="L23" style="left:1152.40px;top:441.74px;font-size:14.6px;letter-spacing:-0.525px;"><u class="l">Boom Chicka Boom</u></div>
<div class="t d" id="L24" style="left:470.30px;top:516.84px;font-size:14.6px;letter-spacing:-0.028px;">Read Aloud with Focus</div>
<div class="t d" id="L25" style="left:470.30px;top:536.74px;font-size:14.6px;letter-spacing:-0.288px;">Lesson (12)</div>
<div class="t d" id="L26" style="left:640.00px;top:506.94px;font-size:14.6px;letter-spacing:-0.180px;"><i>The Pigeon Has to Go</i></div>
<div class="t d" id="L27" style="left:640.00px;top:526.94px;font-size:14.6px;letter-spacing:0.283px;"><i>to School</i> - feelings</div>
<div class="t d" id="L28" style="left:640.00px;top:546.74px;font-size:14.6px;letter-spacing:0.013px;">about going to school</div>
<div class="t d" id="L29" style="left:810.60px;top:496.94px;font-size:14.6px;letter-spacing:0.525px;"><i>The Monster at the</i></div>
<div class="t d" id="L30" style="left:810.60px;top:516.94px;font-size:14.6px;letter-spacing:0.137px;"><i>End of This Book</i> -</div>
<div class="t d" id="L31" style="left:810.60px;top:536.94px;font-size:14.6px;letter-spacing:0.124px;"><u class="l">characters say and</u></div>
<div class="t d" id="L32" style="left:810.60px;top:556.94px;font-size:14.6px;letter-spacing:0.332px;"><u class="l">characters do</u></div>
<div class="t d" id="L33" style="left:981.60px;top:516.84px;font-size:14.6px;letter-spacing:0.116px;"><i>How To Read a Story</i> -</div>
<div class="t d" id="L34" style="left:981.60px;top:536.74px;font-size:14.6px;letter-spacing:0.480px;">tips for reading a story</div>
<div class="t d" id="L35" style="left:1152.40px;top:486.94px;font-size:14.6px;letter-spacing:-0.344px;"><i>Chicka Chicka Boom</i></div>
<div class="t d" id="L36" style="left:1152.40px;top:506.94px;font-size:14.6px;letter-spacing:0.142px;"><i>Boom</i> - it&#8217;s okay if you</div>
<div class="t d" id="L37" style="left:1152.40px;top:526.94px;font-size:14.6px;letter-spacing:0.292px;">can&#8217;t read; look for</div>
<div class="t d" id="L38" style="left:1152.40px;top:546.94px;font-size:14.6px;letter-spacing:0.401px;"><u class="l">treasures in the</u></div>
<div class="t d" id="L39" style="left:1152.40px;top:566.94px;font-size:14.6px;letter-spacing:0.500px;"><u class="l">pictures</u></div>
<div class="t d" id="L40" style="left:1323.20px;top:496.94px;font-size:14.6px;letter-spacing:0.570px;"><i>Another Monster at</i></div>
<div class="t d" id="L41" style="left:1323.20px;top:516.94px;font-size:14.6px;letter-spacing:0.162px;"><i>the End of This Book</i> -</div>
<div class="t d" id="L42" style="left:1323.20px;top:536.94px;font-size:14.6px;letter-spacing:0.088px;"><u class="l">characters say and</u></div>
<div class="t d" id="L43" style="left:1323.20px;top:556.94px;font-size:14.6px;letter-spacing:0.281px;"><u class="l">characters do</u></div>
<div class="t d" id="L44" style="left:470.30px;top:630.24px;font-size:14.6px;letter-spacing:0.522px;">Daily Math Activities</div>
<div class="t d" id="L45" style="left:470.30px;top:650.14px;font-size:14.6px;letter-spacing:-0.250px;">(12)</div>
<div class="t d" id="L46" style="left:640.00px;top:604.81px;font-size:17.3px;letter-spacing:0.215px;"><u class="l">Count Days in School</u>; <u class="l">Aug/Sept Collector Game</u> - review colors and four basic shapes; learn and practice</div>
<div class="t d" id="L47" style="left:640.00px;top:628.41px;font-size:17.3px;letter-spacing:0.096px;"><u class="l">number formation poems 1-10</u></div>
<div class="t d" id="L48" style="left:640.00px;top:652.31px;font-size:17.3px;letter-spacing:0.465px;">Consider <span class="sp">starting calendar</span> the month <i>after</i> you start school so students don&#8217;t confuse the 100 chart</div>
<div class="t d" id="L49" style="left:640.00px;top:675.31px;font-size:17.3px;letter-spacing:0.344px;">used for counting school days with the calendar grid.</div>
<div class="t d" id="L50" style="left:470.40px;top:813.94px;font-size:14.6px;letter-spacing:0.075px;">Centers/Small Group</div>
<div class="t d" id="L51" style="left:470.40px;top:833.94px;font-size:14.6px;letter-spacing:0.677px;">(48-60)</div>
<div class="t d" id="L52" style="left:640.00px;top:714.24px;font-size:14.6px;letter-spacing:-0.005px;">YES, students can</div>
<div class="t d" id="L53" style="left:640.00px;top:734.24px;font-size:14.6px;letter-spacing:0.689px;"><u class="l">start center rotations</u></div>
<div class="t d" id="L54" style="left:640.00px;top:754.24px;font-size:14.6px;letter-spacing:0.612px;"><u class="l">on the first day</u>.</div>
<div class="t d" id="L55" style="left:640.00px;top:774.24px;font-size:14.6px;letter-spacing:0.305px;"><span class="h">Aide</span> - go to</div>
<div class="t d" id="L56" style="left:640.00px;top:794.24px;font-size:14.6px;letter-spacing:-0.059px;">playground, explain</div>
<div class="t d" id="L57" style="left:640.00px;top:814.24px;font-size:14.6px;letter-spacing:0.216px;">rules</div>
<div class="t d" id="L58" style="left:640.00px;top:834.24px;font-size:14.6px;letter-spacing:0.511px;"><span class="h">Independent</span> - free</div>
<div class="t d" id="L59" style="left:640.00px;top:854.24px;font-size:14.6px;letter-spacing:0.344px;">explore pattern blocks</div>
<div class="t d" id="L60" style="left:640.00px;top:874.24px;font-size:14.6px;letter-spacing:-0.006px;"><span class="h">Floor</span> - <u class="l">watch songs on</u></div>
<div class="t d" id="L61" style="left:640.00px;top:894.24px;font-size:14.6px;letter-spacing:0.377px;"><u class="l">the laptop</u></div>
<div class="t d" id="L62" style="left:640.00px;top:914.24px;font-size:14.6px;letter-spacing:0.230px;"><span class="h">Teacher</span> - <u class="l">pencil</u></div>
<div class="t d" id="L63" style="left:640.00px;top:934.24px;font-size:14.6px;letter-spacing:-0.365px;"><u class="l">pickups</u> and <u class="l">name</u></div>
<div class="t d" id="L64" style="left:810.60px;top:743.44px;font-size:14.6px;letter-spacing:0.278px;"><span class="h">Aide</span> - <u class="l">#1 poem </u>with</div>
<div class="t d" id="L65" style="left:810.60px;top:763.44px;font-size:14.6px;letter-spacing:0.396px;"><u class="l">practice sheet</u></div>
<div class="t d" id="L66" style="left:810.60px;top:783.44px;font-size:14.6px;letter-spacing:0.513px;"><span class="h">Independent</span> - free</div>
<div class="t d" id="L67" style="left:810.60px;top:803.44px;font-size:14.6px;letter-spacing:0.368px;">explore pattern blocks</div>
<div class="t d" id="L68" style="left:810.60px;top:823.44px;font-size:14.6px;letter-spacing:0.017px;"><span class="h">Floor</span> - <u class="l">watch songs on</u></div>
<div class="t d" id="L69" style="left:810.60px;top:843.44px;font-size:14.6px;letter-spacing:0.377px;"><u class="l">the laptop</u></div>
<div class="t d" id="L70" style="left:810.60px;top:863.44px;font-size:14.6px;letter-spacing:0.264px;"><span class="h">Teacher</span> - <u class="l">pencil</u></div>
<div class="t d" id="L71" style="left:810.60px;top:883.44px;font-size:14.6px;letter-spacing:-0.330px;"><u class="l">pickups and name</u></div>
<div class="t d" id="L72" style="left:810.60px;top:903.44px;font-size:14.6px;letter-spacing:0.511px;"><u class="l">writing practice</u></div>
<div class="t d" id="L73" style="left:981.60px;top:743.44px;font-size:14.6px;letter-spacing:0.278px;"><span class="h">Aide</span> - <u class="l">#2 poem </u>with</div>
<div class="t d" id="L74" style="left:981.60px;top:763.44px;font-size:14.6px;letter-spacing:0.396px;"><u class="l">practice sheet</u></div>
<div class="t d" id="L75" style="left:981.60px;top:783.44px;font-size:14.6px;letter-spacing:0.513px;"><span class="h">Independent</span> - free</div>
<div class="t d" id="L76" style="left:981.60px;top:803.44px;font-size:14.6px;letter-spacing:-0.047px;">explore wooden blocks</div>
<div class="t d" id="L77" style="left:981.60px;top:823.44px;font-size:14.6px;letter-spacing:0.017px;"><span class="h">Floor</span> - <u class="l">watch songs on</u></div>
<div class="t d" id="L78" style="left:981.60px;top:843.44px;font-size:14.6px;letter-spacing:0.377px;"><u class="l">the laptop</u></div>
<div class="t d" id="L79" style="left:981.60px;top:863.44px;font-size:14.6px;letter-spacing:0.265px;"><span class="h">Teacher</span> - pencil</div>
<div class="t d" id="L80" style="left:981.60px;top:883.44px;font-size:14.6px;letter-spacing:-0.330px;">pickups and name</div>
<div class="t d" id="L81" style="left:981.60px;top:903.44px;font-size:14.6px;letter-spacing:0.511px;">writing practice</div>
<div class="t d" id="L82" style="left:1152.40px;top:743.44px;font-size:14.6px;letter-spacing:0.278px;"><span class="h">Aide</span> - <u class="l">#3 poem </u>with</div>
<div class="t d" id="L83" style="left:1152.40px;top:763.44px;font-size:14.6px;letter-spacing:0.396px;"><u class="l">practice sheet</u></div>
<div class="t d" id="L84" style="left:1152.40px;top:783.44px;font-size:14.6px;letter-spacing:0.514px;"><span class="h">Independent</span> - free</div>
<div class="t d" id="L85" style="left:1152.40px;top:803.44px;font-size:14.6px;letter-spacing:-0.048px;">explore wooden blocks</div>
<div class="t d" id="L86" style="left:1152.40px;top:823.44px;font-size:14.6px;letter-spacing:0.017px;"><span class="h">Floor</span> - <u class="l">watch songs on</u></div>
<div class="t d" id="L87" style="left:1152.40px;top:843.44px;font-size:14.6px;letter-spacing:0.377px;"><u class="l">the laptop</u></div>
<div class="t d" id="L88" style="left:1152.40px;top:863.44px;font-size:14.6px;letter-spacing:0.265px;"><span class="h">Teacher</span> - pencil</div>
<div class="t d" id="L89" style="left:1152.40px;top:883.44px;font-size:14.6px;letter-spacing:-0.329px;">pickups and name</div>
<div class="t d" id="L90" style="left:1152.40px;top:903.44px;font-size:14.6px;letter-spacing:0.511px;">writing practice</div>
<div class="t d" id="L91" style="left:1323.20px;top:723.44px;font-size:14.6px;letter-spacing:0.277px;"><span class="h">Aide</span> - <u class="l">#4 poem </u>with</div>
<div class="t d" id="L92" style="left:1323.20px;top:743.44px;font-size:14.6px;letter-spacing:0.396px;"><u class="l">practice sheet</u></div>
<div class="t d" id="L93" style="left:1323.20px;top:763.44px;font-size:14.6px;letter-spacing:0.514px;"><span class="h">Independent</span> - free</div>
<div class="t d" id="L94" style="left:1323.20px;top:783.44px;font-size:14.6px;letter-spacing:0.313px;">explore books (look for</div>
<div class="t d" id="L95" style="left:1323.20px;top:803.44px;font-size:14.6px;letter-spacing:0.429px;"><u class="l">treasures in the</u></div>
<div class="t d" id="L96" style="left:1323.20px;top:823.44px;font-size:14.6px;letter-spacing:0.566px;"><u class="l">pictures</u>)</div>
<div class="t d" id="L97" style="left:1323.20px;top:843.44px;font-size:14.6px;letter-spacing:0.017px;"><span class="h">Floor</span> - <u class="l">watch songs on</u></div>
<div class="t d" id="L98" style="left:1323.20px;top:863.44px;font-size:14.6px;letter-spacing:0.378px;"><u class="l">the laptop</u></div>
<div class="t d" id="L99" style="left:1323.20px;top:883.44px;font-size:14.6px;letter-spacing:0.265px;"><span class="h">Teacher</span> - <u class="l">pencil</u></div>
<div class="t d" id="L100" style="left:1323.20px;top:903.44px;font-size:14.6px;letter-spacing:-0.329px;"><u class="l">pickups and name</u></div>
<div class="t d" id="L101" style="left:1323.20px;top:923.44px;font-size:14.6px;letter-spacing:0.512px;"><u class="l">writing practice</u></div>
<div class="t" id="C0" style="left:65.50px;top:14.16px;font-size:18.6px;letter-spacing:-0.234px;color:#1f1f1f">Weekly Lesson Plans 1</div>
<div class="t" id="C1" style="left:66.25px;top:39.43px;font-size:15.5px;letter-spacing:-0.611px;color:#1f1f1f">File</div>
<div class="t" id="C2" style="left:106.90px;top:39.43px;font-size:15.5px;letter-spacing:-0.302px;color:#1f1f1f">Edit</div>
<div class="t" id="C3" style="left:149.80px;top:39.43px;font-size:15.5px;letter-spacing:-0.504px;color:#1f1f1f">View</div>
<div class="t" id="C4" style="left:199.00px;top:39.43px;font-size:15.5px;letter-spacing:0.127px;color:#1f1f1f">Insert</div>
<div class="t" id="C5" style="left:255.30px;top:39.43px;font-size:15.5px;letter-spacing:-0.078px;color:#1f1f1f">Format</div>
<div class="t" id="C6" style="left:321.00px;top:39.43px;font-size:15.5px;letter-spacing:-0.072px;color:#1f1f1f">Tools</div>
<div class="t" id="C7" style="left:374.70px;top:39.43px;font-size:15.5px;letter-spacing:-0.247px;color:#1f1f1f">Extensions</div>
<div class="t" id="C8" style="left:465.90px;top:39.43px;font-size:15.5px;letter-spacing:-0.493px;color:#1f1f1f">Help</div>
<div class="t" id="C9" style="left:65.30px;top:81.88px;font-size:14.5px;letter-spacing:0.294px;color:#444746">Menus</div>
<div class="t" id="C10" style="left:310.50px;top:82.30px;font-size:15.0px;letter-spacing:0.041px;color:#444746">100%</div>
<div class="t" id="C11" style="left:403.20px;top:81.70px;font-size:15.0px;letter-spacing:0.443px;color:#444746">Normal text</div>
<div class="t" id="C12" style="left:541.80px;top:81.70px;font-size:15.0px;letter-spacing:-0.015px;color:#444746">Comic...</div>
<div class="t" id="C13" style="left:680.60px;top:81.70px;font-size:15.0px;letter-spacing:-1.891px;color:#1f1f1f">14</div>
<div class="t" id="C14" style="left:1796.40px;top:82.33px;font-size:15.5px;letter-spacing:0.101px;color:#1f1f1f;-webkit-text-stroke:0.25px #1f1f1f">Editing</div>
<div class="t" id="C15" style="left:1904.60px;top:23.03px;font-size:15.5px;letter-spacing:-0.497px;color:#001d35;font-weight:bold">Share</div>
<div style="position:absolute;left:1375.5px;top:207px;width:2px;height:28px;background:#137333"></div>
<div style="position:absolute;left:1375.5px;top:204.5px;width:5px;height:5px;border-radius:1px;background:#137333"></div>
<div style="position:absolute;left:0;top:912px;width:2048px;height:34px;background:linear-gradient(rgba(0,0,0,0),rgba(0,0,0,0.035))"></div>
<svg class="ic" style="left:1980px;top:925px;width:68px;height:21px" viewBox="1980 925 68 21"><path d="M2016.8 939.6L2021.8 944.6L2016.8 949.6" stroke="#444746" stroke-width="1.6" fill="none"/></svg>
<svg class="ic" style="left:1705px;top:895px;width:30px;height:30px;overflow:visible" viewBox="1705 895 30 30">
<path d="M1715.1 901L1715.1 916L1718.6 912.8L1721.6 920L1724 919L1721.2 911.8L1725.9 911.6Z" fill="rgba(0,0,0,0.25)" transform="translate(0.6 1)" style="filter:blur(1px)"/>
<path d="M1715.1 901L1715.1 916L1718.6 912.8L1721.6 920L1724 919L1721.2 911.8L1725.9 911.6Z" fill="#000" stroke="#fff" stroke-width="1.4" stroke-linejoin="round" paint-order="stroke"/>
</svg>
</body></html>
